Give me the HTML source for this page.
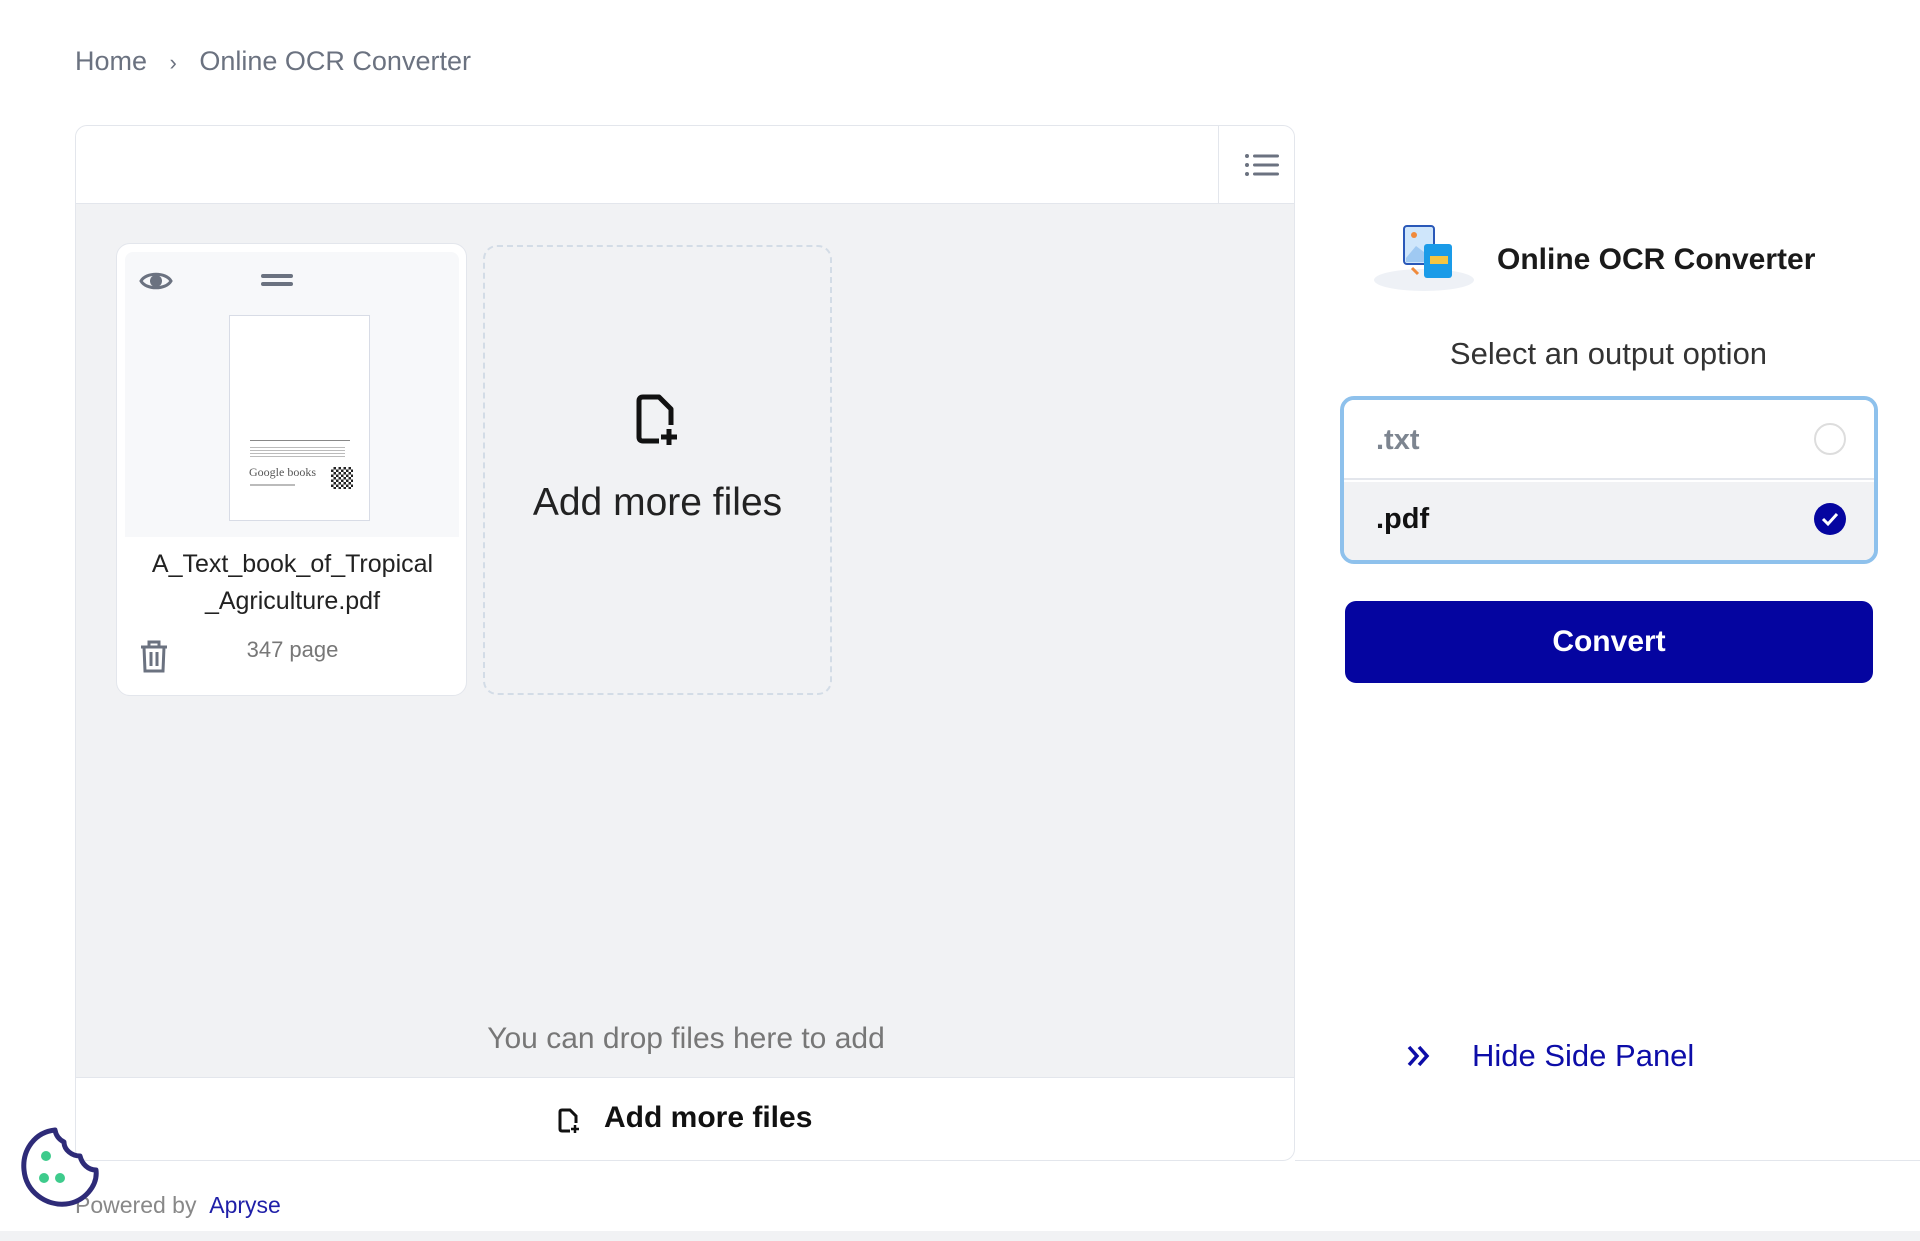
<!DOCTYPE html>
<html><head><meta charset="utf-8"><style>
*{margin:0;padding:0;box-sizing:border-box}
body{width:1920px;height:1221px;background:#fff;font-family:"Liberation Sans",sans-serif;position:relative;overflow:hidden;color:#222}
.abs{position:absolute}
.crumb{left:75px;top:46px;font-size:27px;color:#6b7280}
.panel{left:75px;top:125px;width:1220px;height:1036px;border:1px solid #e3e6ec;border-radius:12px;overflow:hidden;background:#f1f2f4}
.hdr{left:0;top:0;width:1220px;height:78px;background:#fff;border-bottom:1px solid #e3e6ec}
.card{left:40px;top:117px;width:351px;height:453px;background:#fff;border:1px solid #e3e6ec;border-radius:14px}
.thumb{left:8px;top:8px;width:334px;height:285px;background:#f7f8fa;border-radius:8px 8px 0 0}
.page{left:104px;top:63px;width:141px;height:206px;background:#fff;border:1px solid #d8dce6}
.fname{left:0;width:351px;text-align:center;font-size:25px;line-height:37px;top:302px;color:#222}
.dash{left:407px;top:119px;width:349px;height:450px;border:2px dashed #d3dce6;border-radius:14px}
.foot{left:0;top:951px;width:1220px;height:85px;background:#fff;border-top:1px solid #e3e6ec}
</style></head><body>
<div class="abs crumb">Home &nbsp;&nbsp;<span style="font-size:22px">›</span>&nbsp;&nbsp; Online OCR Converter</div>

<div class="abs panel">
 <div class="abs hdr">
  <div class="abs" style="left:1142px;top:0;width:1px;height:78px;background:#e3e6ec"></div>
  <svg class="abs" style="left:1168px;top:27px" width="36" height="24" viewBox="0 0 36 24"><g fill="#6b7280"><circle cx="3" cy="3" r="2"/><circle cx="3" cy="12" r="2"/><circle cx="3" cy="21" r="2"/><rect x="9" y="1.5" width="26" height="3" rx="1.5"/><rect x="9" y="10.5" width="26" height="3" rx="1.5"/><rect x="9" y="19.5" width="26" height="3" rx="1.5"/></g></svg>
 </div>
 <div class="abs card">
  <div class="abs thumb">
   <svg class="abs" style="left:14px;top:16px" width="34" height="26" viewBox="0 0 34 26"><path d="M2 13C7 4 27 4 32 13C27 22 7 22 2 13Z" fill="none" stroke="#6b7280" stroke-width="3"/><circle cx="17" cy="13" r="6" fill="#6b7280"/></svg>
   <div class="abs" style="left:136px;top:22px;width:32px;height:4px;background:#6b7280;border-radius:2px"></div>
   <div class="abs" style="left:136px;top:30px;width:32px;height:4px;background:#6b7280;border-radius:2px"></div>
   <div class="abs page">
    <div class="abs" style="left:20px;top:124px;width:100px;height:1px;background:#888"></div>
    <div class="abs" style="left:20px;top:131px;width:95px;height:12px;background:repeating-linear-gradient(#bbb 0 1px,transparent 1px 3px)"></div>
    <div class="abs" style="left:19px;top:149px;font-family:'Liberation Serif',serif;font-size:12px;color:#555">Google books</div>
    <div class="abs" style="left:101px;top:151px;width:22px;height:22px;background:repeating-conic-gradient(#222 0 25%,#fff 0 50%) 0 0/5px 5px"></div>
    <div class="abs" style="left:20px;top:168px;width:45px;height:2px;background:#bbb"></div>
   </div>
  </div>
  <div class="abs fname">A_Text_book_of_Tropical<br>_Agriculture.pdf</div>
  <svg class="abs" style="left:22px;top:396px" width="30" height="34" viewBox="0 0 30 34"><g fill="none" stroke="#6b7280" stroke-width="3"><path d="M2 7H28M10 7V2H20V7M5 7L6 31H24L25 7M12 12V26M18 12V26"/></g></svg>
  <div class="abs" style="left:0;width:351px;text-align:center;top:393px;font-size:22px;color:#777">347 page</div>
 </div>
 <div class="abs dash">
  <svg class="abs" style="left:150px;top:146px" width="46" height="54" viewBox="0 0 46 54"><path d="M24 48H8Q4 48 4 44V8Q4 4 8 4H24L36 16V32" fill="none" stroke="#111" stroke-width="5" stroke-linejoin="round"/><path d="M34 36V52M26 44H42" stroke="#111" stroke-width="5"/></svg>
  <div class="abs" style="left:0;width:345px;text-align:center;top:234px;font-size:39px;color:#222">Add more files</div>
 </div>
 <div class="abs" style="left:0;width:1220px;text-align:center;top:896px;font-size:30px;color:#777">You can drop files here to add</div>
 <div class="abs foot">
  <svg class="abs" style="left:482px;top:30px" width="22" height="26" viewBox="0 0 22 26"><path d="M12 23H4Q2 23 2 21V4Q2 2 4 2H12L18 8V15" fill="none" stroke="#111" stroke-width="3"/><path d="M17 17V25M13 21H21" stroke="#111" stroke-width="2.5"/></svg>
  <div class="abs" style="left:528px;top:23px;font-size:30px;font-weight:bold;color:#111">Add more files</div>
 </div>
</div>

<svg class="abs" style="left:1372px;top:222px" width="110" height="72" viewBox="0 0 110 72"><ellipse cx="52" cy="58" rx="50" ry="11" fill="#eef1f6"/><rect x="32" y="4" width="30" height="38" rx="3" fill="#cfe6fb" stroke="#2a58b8" stroke-width="2"/><circle cx="42" cy="13" r="3" fill="#f08a3c"/><path d="M34 36L44 24L52 30L60 22V40H34Z" fill="#9fc9f2"/><rect x="52" y="22" width="28" height="34" rx="3" fill="#1a9be8"/><rect x="58" y="34" width="18" height="8" fill="#f5c542"/><path d="M40 46L46 52" stroke="#f08a3c" stroke-width="3"/></svg>
<div class="abs" style="left:1497px;top:243px;font-size:30px;font-weight:bold;color:#1a1a1a">Online OCR Converter</div>
<div class="abs" style="left:1340px;width:537px;text-align:center;top:336px;font-size:31px;color:#333">Select an output option</div>
<div class="abs" style="left:1340px;top:396px;width:538px;height:168px;border:4px solid #8ec1ec;border-radius:14px;overflow:hidden">
 <div class="abs" style="left:0;top:0;width:530px;height:80px;background:#fff;border-bottom:2px solid #e3e6ec"></div>
 <div class="abs" style="left:0;top:82px;width:530px;height:80px;background:#f1f2f4"></div>
 <div class="abs" style="left:32px;top:24px;font-size:29px;font-weight:bold;color:#7d8590">.txt</div>
 <div class="abs" style="left:470px;top:23px;width:32px;height:32px;border:2px solid #ddd;border-radius:50%;background:#fff"></div>
 <div class="abs" style="left:32px;top:103px;font-size:29px;font-weight:bold;color:#111">.pdf</div>
 <svg class="abs" style="left:470px;top:103px" width="32" height="32" viewBox="0 0 32 32"><circle cx="16" cy="16" r="16" fill="#0505a0"/><path d="M9 16L14 21L23 11" fill="none" stroke="#fff" stroke-width="3"/></svg>
</div>
<div class="abs" style="left:1345px;top:601px;width:528px;height:82px;background:#0505a0;border-radius:11px;color:#fff;font-size:30px;font-weight:bold;text-align:center;line-height:82px">Convert</div>
<svg class="abs" style="left:1406px;top:1044px" width="26" height="24" viewBox="0 0 26 24"><path d="M3 3L11 12L3 21M13 3L21 12L13 21" fill="none" stroke="#0d0da8" stroke-width="3.5"/></svg>
<div class="abs" style="left:1472px;top:1038px;font-size:31px;color:#0d0da8">Hide Side Panel</div>

<div class="abs" style="left:1295px;top:1160px;width:625px;height:1px;background:#e3e6ec"></div>
<div class="abs" style="left:0;top:1231px;width:1920px;height:10px;background:#f1f2f4"></div>
<div class="abs" style="left:75px;top:1192px;font-size:23px;color:#888">Powered by &nbsp;<span style="color:#1f1fa8">Apryse</span></div>
<svg class="abs" style="left:18px;top:1126px" width="84" height="84" viewBox="0 0 84 84"><path d="M37 4C17 6 4 24 6 44C8 66 28 80 48 78C66 76 80 60 78 44C70 44 64 38 62 30C54 30 46 24 46 16C42 14 38 10 37 4Z" fill="#fff" stroke="#2e2b78" stroke-width="5" stroke-linejoin="round"/><circle cx="28" cy="30" r="5" fill="#3ecb8c"/><circle cx="26" cy="52" r="5" fill="#3ecb8c"/><circle cx="42" cy="52" r="5" fill="#3ecb8c"/></svg>
</body></html>
